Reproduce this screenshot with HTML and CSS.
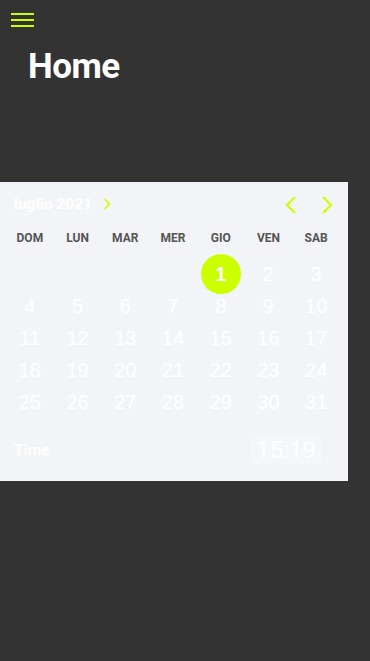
FILE: index.html
```html
<!DOCTYPE html>
<html>
<head>
<meta charset="utf-8">
<link rel="stylesheet" href="styles.css">
</head>
<body>
<div class="app">
  <div class="topbar">
    <div class="burger"><span></span><span></span><span></span></div>
  </div>
  <h1 class="title">Home</h1>
  <div class="calendar">
    <div class="cal-head">
      <div class="month">luglio 2021
        <svg class="mchev" width="8" height="12" viewBox="0 0 8 12"><path d="M1.5 1 L6.5 6 L1.5 11" fill="none" stroke="#ccff00" stroke-width="1.7"/></svg>
      </div>
      <div class="navs">
        <svg width="12" height="20" viewBox="0 0 12 20"><path d="M10 2 L2 10 L10 18" fill="none" stroke="#ccff00" stroke-width="2.2"/></svg>
        <svg width="12" height="20" viewBox="0 0 12 20"><path d="M2 2 L10 10 L2 18" fill="none" stroke="#ccff00" stroke-width="2.2"/></svg>
      </div>
    </div>
    <div class="grid wk">
      <div>DOM</div><div>LUN</div><div>MAR</div><div>MER</div><div>GIO</div><div>VEN</div><div>SAB</div>
    </div>
    <div class="grid days">
      <div></div><div></div><div></div><div></div><div class="sel"><span>1</span></div><div>2</div><div>3</div>
      <div>4</div><div>5</div><div>6</div><div>7</div><div>8</div><div>9</div><div>10</div>
      <div>11</div><div>12</div><div>13</div><div>14</div><div>15</div><div>16</div><div>17</div>
      <div>18</div><div>19</div><div>20</div><div>21</div><div>22</div><div>23</div><div>24</div>
      <div>25</div><div>26</div><div>27</div><div>28</div><div>29</div><div>30</div><div>31</div>
    </div>
    <div class="time-row">
      <div class="time-label">Time</div>
      <div class="time-box">15:19</div>
    </div>
  </div>
</div>
</body>
</html>
```

FILE: styles.css
```css
html, body {
  margin: 0;
  padding: 0;
  background: #333333;
}
.app {
  width: 370px;
  height: 661px;
  background: #333333;
  font-family: Roboto, "Liberation Sans", sans-serif;
}
.topbar {
  padding: 13px 0 0 11px;
  height: 28px;
  box-sizing: border-box;
}
.burger {
  width: 23px;
  display: flex;
  flex-direction: column;
  gap: 4px;
}
.burger span {
  display: block;
  height: 2px;
  background: #ccff00;
}
.title {
  margin: 19px 0 0 28px;
  font-size: 35px;
  font-weight: 700;
  color: #ffffff;
  line-height: 40px;
  letter-spacing: -0.5px;
}
.calendar {
  margin-top: 95px;
  width: 348px;
  height: 299px;
  background: #f3f4f8;
  box-sizing: border-box;
  padding: 0 8px 0 6px;
}
.cal-head {
  height: 44px;
  display: flex;
  align-items: center;
  justify-content: space-between;
  padding-left: 8px;
}
.month {
  font-size: 15.5px;
  font-weight: 700;
  color: #ffffff;
  display: flex;
  align-items: center;
  gap: 11px;
}
.mchev { display: block; }
.navs {
  display: flex;
  gap: 24px;
  padding-right: 7px;
  padding-top: 2px;
}
.navs svg { display: block; }
.grid {
  display: grid;
  grid-template-columns: repeat(7, 1fr);
  text-align: center;
}
.wk {
  height: 24px;
  align-items: center;
  font-size: 12px;
  font-weight: 700;
  color: #555555;
}
.days {
  margin-top: 8px;
  grid-auto-rows: 32px;
  font-family: "Liberation Sans", Arial, sans-serif;
  font-size: 20px;
  color: #ffffff;
}
.days div {
  display: flex;
  align-items: center;
  justify-content: center;
}
.sel span {
  width: 40px;
  height: 40px;
  flex: none;
  border-radius: 50%;
  background: #ccff00;
  color: #ffffff;
  font-weight: 700;
  display: flex;
  align-items: center;
  justify-content: center;
}
.time-row {
  margin-top: 17px;
  display: flex;
  align-items: center;
  justify-content: space-between;
  padding-left: 8px;
  padding-right: 16px;
}
.time-label {
  font-size: 15.5px;
  font-weight: 700;
  color: #ffffff;
}
.time-box {
  font-size: 24px;
  font-weight: 400;
  color: #ffffff;
  padding: 0 7px;
  height: 28px;
  line-height: 28px;
  border-radius: 6px;
  background: #f5f6f9;
  border: 1px solid #f0f1f5;
}
```
